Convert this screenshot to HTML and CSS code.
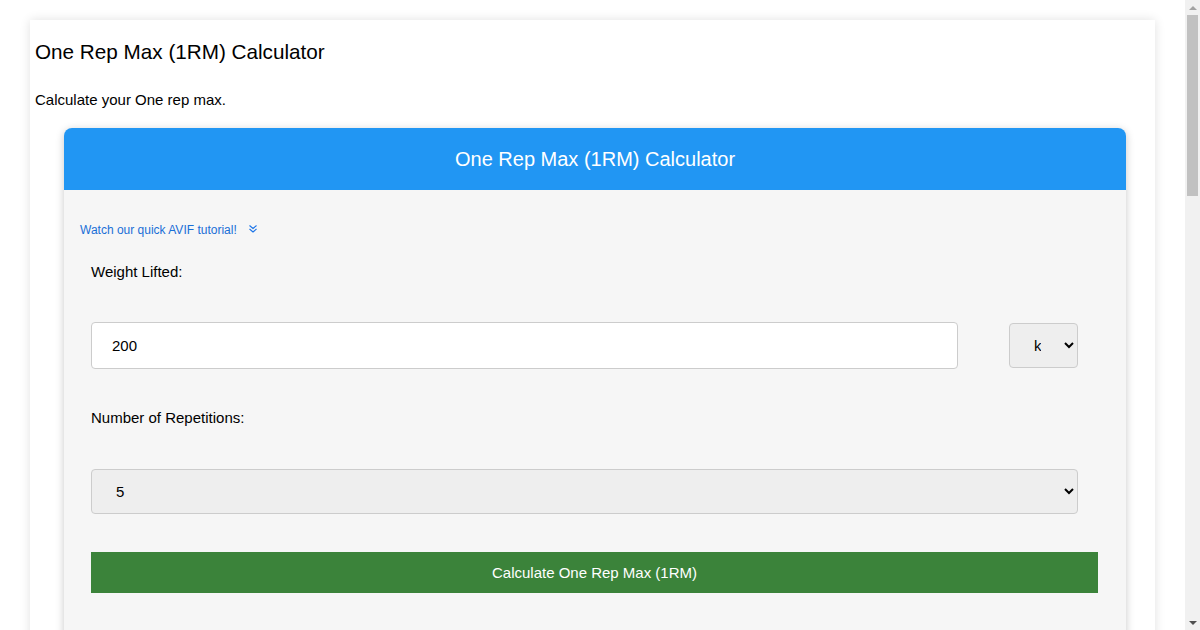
FILE: index.html
```html
<!DOCTYPE html>
<html lang="en">
<head>
<meta charset="utf-8">
<title>One Rep Max (1RM) Calculator</title>
<link rel="stylesheet" href="styles.css">
</head>
<body>
<div class="page">
  <h1 class="page-title">One Rep Max (1RM) Calculator</h1>
  <p class="intro">Calculate your One rep max.</p>
  <div class="card">
    <div class="card-header">One Rep Max (1RM) Calculator</div>
    <div class="card-body">
      <a class="tutorial" href="#">Watch our quick AVIF tutorial!
        <svg class="chev" width="10" height="10" viewBox="0 0 10 10" aria-hidden="true"><path d="M1.5 1.5 L5 4.5 L8.5 1.5 M1.5 5 L5 8 L8.5 5" fill="none" stroke="#1a73e8" stroke-width="1.1"/></svg>
      </a>
      <div class="form">
        <label class="label" for="w">Weight Lifted:</label>
        <div class="row">
          <input id="w" class="input" type="text" value="200">
          <select class="unit"><option>k</option><option>lb</option></select>
        </div>
        <label class="label" for="r">Number of Repetitions:</label>
        <select id="r" class="reps"><option>5</option></select>
        <button class="calc">Calculate One Rep Max (1RM)</button>
      </div>
      <div class="more">
        <h2 class="more-title">How the One Rep Max is calculated</h2>
        <p class="more-text">Your one rep max is estimated from the weight you lifted and the number of repetitions you completed.</p>
      </div>
    </div>
  </div>
</div>
<div class="scrollbar" aria-hidden="true">
  <div class="sb-up"></div>
  <div class="sb-track"><div class="sb-thumb"></div></div>
  <div class="sb-down"></div>
</div>
</body>
</html>
```

FILE: styles.css
```css
html, body {
  margin: 0;
  padding: 0;
  background: #fff;
  font-family: "Liberation Sans", Arial, sans-serif;
  color: #000;
}
.page {
  margin: 20px 45px 0 30px;
  padding: 1px 5px 40px;
  background: #fff;
  box-shadow: 0 0 10px rgba(0,0,0,0.12);
  min-height: 2030px;
}
.page-title {
  font-size: 20.7px;
  font-weight: normal;
  line-height: 24px;
  margin: 19px 0 0;
}
.intro {
  font-size: 15px;
  line-height: 18px;
  margin: 27px 0 0;
}
.card {
  margin: 19px 24px 0 29px;
  background: #f6f6f6;
  border-radius: 8px;
  box-shadow: 0 2px 8px rgba(0,0,0,0.22);
  overflow: hidden;
}
.card-header {
  background: #2196f3;
  color: #fff;
  height: 62px;
  display: flex;
  align-items: center;
  justify-content: center;
  font-size: 20px;
}
.card-body {
  padding: 30px 28px 40px 16px;
}
.tutorial {
  display: inline-flex;
  align-items: center;
  gap: 11px;
  font-size: 12px;
  line-height: 14px;
  color: #1a6fd6;
  text-decoration: none;
}
.chev { margin-top: -3px; }
.form {
  padding-left: 11px;
  display: flex;
  flex-direction: column;
  align-items: flex-start;
}
.label {
  font-size: 15px;
  line-height: 18px;
  margin-top: 25px;
}
.row {
  display: flex;
  align-items: center;
  gap: 51px;
  margin-top: 41px;
  width: 987px;
}
.input {
  box-sizing: border-box;
  width: 867px;
  height: 47px;
  padding: 0 20px;
  border: 1px solid #ccc;
  border-radius: 4px;
  background: #fff;
  font-family: inherit;
  font-size: 15px;
  color: #000;
}
.unit, .reps {
  box-sizing: border-box;
  height: 45px;
  padding: 0 20px;
  border: 1px solid #ccc;
  border-radius: 4px;
  background-color: #eee;
  font-family: inherit;
  font-size: 15px;
  color: #000;
}
.unit { width: 69px; }
.row + .label { margin-top: 40px; }
.reps {
  width: 987px;
  margin-top: 42px;
}
.calc {
  margin-top: 38px;
  width: 1007px;
  height: 41px;
  border: 0;
  background: #3b833a;
  color: #fff;
  font-family: inherit;
  font-size: 15px;
}
.more {
  margin-top: 90px;
  padding-left: 11px;
}
.more-title {
  font-size: 18px;
  font-weight: normal;
  margin: 0;
}
.more-text {
  font-size: 15px;
}
.scrollbar {
  position: fixed;
  top: 0;
  right: 0;
  width: 15px;
  height: 100vh;
  background: #f1f1f1;
  display: flex;
  flex-direction: column;
}
.sb-up, .sb-down {
  height: 15px;
  display: flex;
  align-items: center;
  justify-content: center;
}
.sb-up::before {
  content: "";
  border-left: 4px solid transparent;
  border-right: 4px solid transparent;
  border-bottom: 4px solid #a3a3a3;
}
.sb-down::before {
  content: "";
  border-left: 4px solid transparent;
  border-right: 4px solid transparent;
  border-top: 4px solid #505050;
}
.sb-track {
  flex: 1;
  padding: 0 2px;
}
.sb-thumb {
  height: 181px;
  background: #c1c1c1;
}
```
